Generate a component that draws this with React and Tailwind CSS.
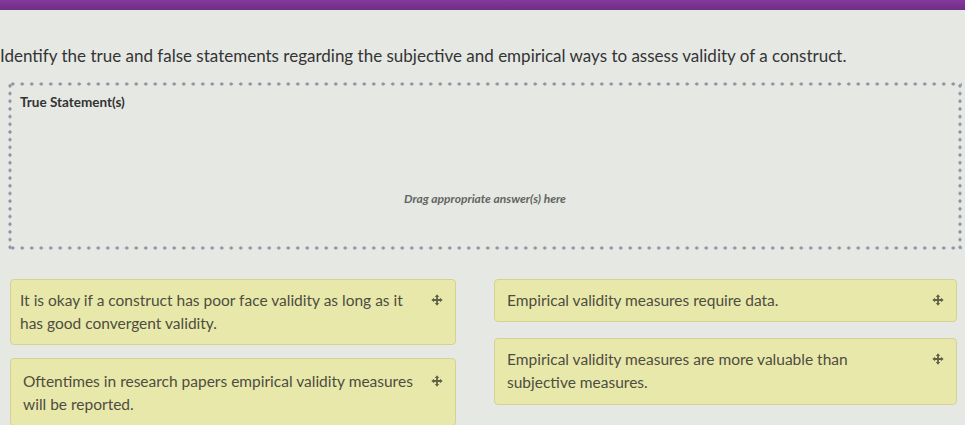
import React from "react";

function MoveIcon() {
  return (
    <svg width="12" height="12" viewBox="0 0 12 12" className="shrink-0 text-[#5f6245]" fill="currentColor">
      <path d="M6 0.3 L8.2 3.1 L6.9 3.1 L6.9 5.1 L8.9 5.1 L8.9 3.8 L11.7 6 L8.9 8.2 L8.9 6.9 L6.9 6.9 L6.9 8.9 L8.2 8.9 L6 11.7 L3.8 8.9 L5.1 8.9 L5.1 6.9 L3.1 6.9 L3.1 8.2 L0.3 6 L3.1 3.8 L3.1 5.1 L5.1 5.1 L5.1 3.1 L3.8 3.1 Z" />
    </svg>
  );
}

function Card({ text, className, textWidth }) {
  return (
    <div className={"flex items-start justify-between rounded-[4px] border border-[#d4d195] bg-[#e9e8ab] pr-[12px] " + className}>
      <p className={"text-[15.5px] leading-[23px] text-[#4d4d40] " + textWidth}>{text}</p>
      <div className="pt-[5px]">
        <MoveIcon />
      </div>
    </div>
  );
}

export default function App() {
  return (
    <div className="w-[965px] h-[425px] overflow-hidden bg-[#e6e8e4] font-['Lato',sans-serif]">
      <div className="h-[10px] bg-gradient-to-b from-[#86389c] to-[#6d2f86]" />

      <h1 className="mt-[35px] text-[17px] leading-[22px] text-[#343434]">
        Identify the true and false statements regarding the subjective and empirical ways to assess validity of a construct.
      </h1>

      <div className="ml-[8px] mr-[3px] mt-[15px] h-[168px] flex flex-col px-[12px] pt-[12px] [background-image:radial-gradient(circle,#8d93a3_1.4px,transparent_1.8px),radial-gradient(circle,#8d93a3_1.4px,transparent_1.8px),radial-gradient(circle,#8d93a3_1.4px,transparent_1.8px),radial-gradient(circle,#8d93a3_1.4px,transparent_1.8px)] [background-size:9.5px_4px,9.5px_4px,4px_7.7px,4px_7.7px] [background-position:0_0,0_100%,0_0,100%_0] [background-repeat:repeat-x,repeat-x,repeat-y,repeat-y]">
        <p className="text-[13.5px] font-bold text-[#333] leading-[16px]">True Statement(s)</p>
        <div className="flex-1 flex items-center justify-center pb-[6px]">
          <p className="mt-[44px] text-[12px] font-bold italic text-[#63655f]">Drag appropriate answer(s) here</p>
        </div>
      </div>

      <div className="mt-[29px] flex gap-[38px] pl-[10px]">
        <div className="w-[446px] flex flex-col gap-[13px]">
          <Card className="h-[66px] pl-[9px] pt-[9px]" textWidth="w-[395px]" text="It is okay if a construct has poor face validity as long as it has good convergent validity." />
          <Card className="h-[68px] pl-[12px] pt-[11px]" textWidth="w-[405px]" text="Oftentimes in research papers empirical validity measures will be reported." />
        </div>
        <div className="w-[463px] flex flex-col gap-[16px]">
          <Card className="h-[43px] pl-[12px] pt-[9px]" textWidth="w-[400px]" text="Empirical validity measures require data." />
          <Card className="h-[67px] pl-[12px] pt-[9px]" textWidth="w-[380px]" text="Empirical validity measures are more valuable than subjective measures." />
        </div>
      </div>
    </div>
  );
}
